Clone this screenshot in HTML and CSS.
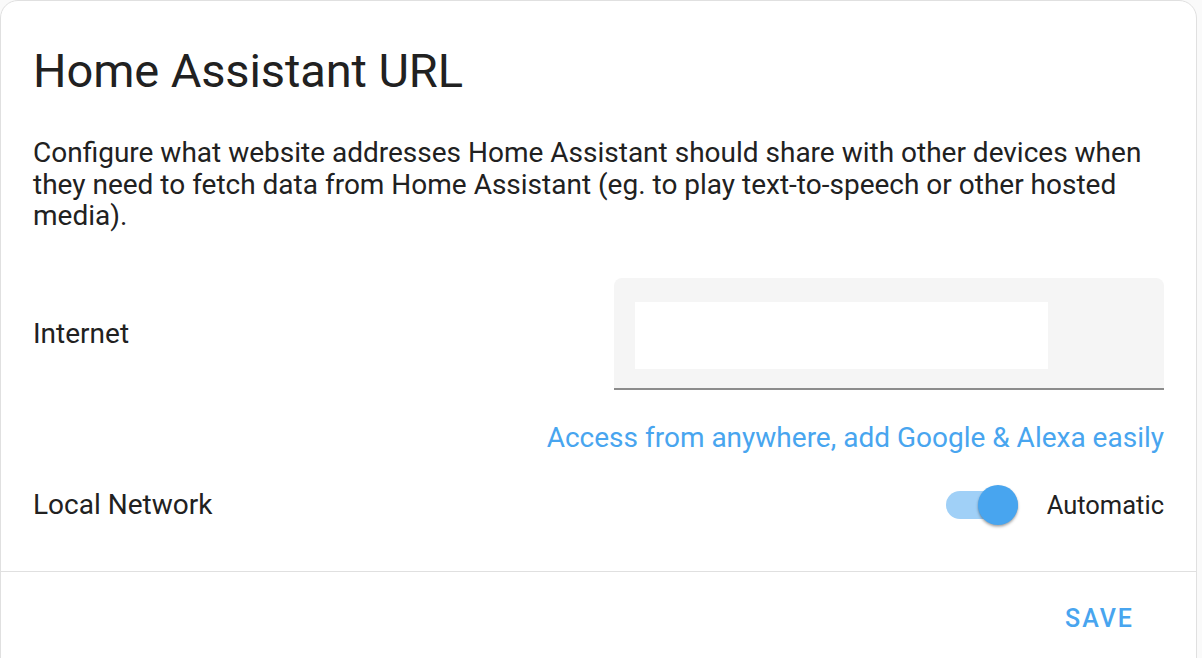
FILE: index.html
```html
<!DOCTYPE html>
<html>
<head>
<meta charset="utf-8">
<link rel="stylesheet" href="styles.css">
</head>
<body>
<div class="card">
  <h1 class="card-title">Home Assistant URL</h1>
  <div class="card-content">
    <p class="description">Configure what website addresses Home Assistant should share with other devices when they need to fetch data from Home Assistant (eg. to play text-to-speech or other hosted media).</p>
    <div class="row row-internet">
      <span class="label">Internet</span>
      <div class="textfield"><div class="input"></div></div>
    </div>
    <div class="link-row"><a class="link" href="#">Access from anywhere, add Google &amp; Alexa easily</a></div>
    <div class="row row-local">
      <span class="label">Local Network</span>
      <div class="switch-group">
        <span class="switch"><span class="track"></span><span class="knob"></span></span>
        <span class="switch-label">Automatic</span>
      </div>
    </div>
  </div>
  <div class="card-actions">
    <button class="btn-save">SAVE</button>
  </div>
</div>
</body>
</html>
```

FILE: styles.css
```css
html, body {
  margin: 0;
  padding: 0;
  background: #fafafa;
  font-family: Roboto, "Noto Sans", sans-serif;
  color: #212121;
  overflow: hidden;
}
.card {
  box-sizing: border-box;
  width: 1197px;
  height: 680px;
  background: #fff;
  border: 1px solid #e0e0e0;
  border-radius: 18px;
}
.card-title {
  margin: 0;
  padding: 38px 32px 0 32px;
  font-size: 47px;
  font-weight: 400;
  line-height: 64px;
  letter-spacing: -0.1px;
}
.card-content {
  padding: 0 32px 0 32px;
}
.description {
  margin: 34px 0 0 0;
  font-size: 28px;
  line-height: 31.5px;
}
.row {
  display: flex;
  align-items: center;
  justify-content: space-between;
}
.row-internet {
  margin-top: 46px;
}
.label {
  font-size: 28px;
  line-height: 32px;
}
.textfield {
  box-sizing: border-box;
  width: 550px;
  height: 112px;
  background: #f5f5f5;
  border-radius: 8px 8px 0 0;
  border-bottom: 2px solid #8c8c8c;
  padding: 24px 0 0 21px;
}
.input {
  width: 413px;
  height: 67px;
  background: #fff;
}
.link-row {
  display: flex;
  justify-content: flex-end;
  margin-top: 32px;
}
.link {
  color: #48a5ef;
  text-decoration: none;
  font-size: 28px;
  line-height: 32px;
}
.row-local {
  margin-top: 31px;
  height: 40px;
}
.switch-group {
  display: flex;
  align-items: center;
  gap: 29px;
}
.switch {
  position: relative;
  width: 72px;
  height: 40px;
  display: block;
}
.track {
  position: absolute;
  left: 0;
  top: 6px;
  width: 72px;
  height: 28px;
  border-radius: 14px;
  background: #a0d0f7;
}
.knob {
  position: absolute;
  right: 0;
  top: 0;
  width: 40px;
  height: 40px;
  border-radius: 50%;
  background: #48a5ef;
  box-shadow: 0 2px 3px rgba(0,0,0,0.25), 0 1px 2px rgba(0,0,0,0.15);
}
.switch-label {
  font-size: 25.5px;
  line-height: 32px;
}
.card-actions {
  margin-top: 46px;
  border-top: 1px solid #e0e0e0;
  display: flex;
  justify-content: flex-end;
  padding: 23px 46px 0 0;
}
.btn-save {
  background: none;
  border: none;
  padding: 8px 16px;
  font-family: Roboto, "Noto Sans", sans-serif;
  font-size: 25px;
  font-weight: 500;
  letter-spacing: 2px;
  color: #48a5ef;
  line-height: 32px;
}
```
